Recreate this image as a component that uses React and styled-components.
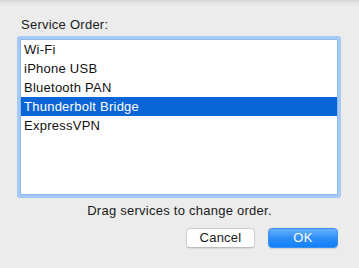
import React from "react";
import styled, { createGlobalStyle } from "styled-components";

const Global = createGlobalStyle`
  html, body { margin: 0; padding: 0; background: #ececec; }
  body { font-family: "Liberation Sans", Arial, sans-serif; }
`;

const Sheet = styled.div`
  width: 359px;
  height: 268px;
  box-sizing: border-box;
  padding: 17px 21px 0 20px;
  background: linear-gradient(#d6d6d6 0px, #e6e6e6 3px, #ececec 6px);
  display: flex;
  flex-direction: column;
  font-size: 13px;
  line-height: 16px;
  letter-spacing: 0.25px;
  color: #1a1a1a;
`;

const Label = styled.div`
  padding-left: 1px;
  margin-bottom: 6px;
`;

const List = styled.div`
  height: 156px;
  box-sizing: border-box;
  background: #fff;
  border: 1px solid #8fb8ee;
  box-shadow: 0 0 0 3px #a6c9f5;
  border-radius: 1px;
  display: flex;
  flex-direction: column;
`;

const Row = styled.div`
  height: 19px;
  line-height: 19px;
  padding-left: 3px;
  background: ${(p) => (p.$selected ? "#0a66d6" : "transparent")};
  color: ${(p) => (p.$selected ? "#fff" : "#111")};
  white-space: nowrap;
`;

const Hint = styled.div`
  margin-top: 8px;
  text-align: center;
  margin-right: -1px;
`;

const Buttons = styled.div`
  margin-top: 9px;
  display: flex;
  justify-content: flex-end;
  gap: 13px;
  padding-right: 0px;
`;

const Button = styled.button`
  width: ${(p) => (p.$primary ? "70px" : "69px")};
  height: 20px;
  box-sizing: border-box;
  font: inherit;
  letter-spacing: 0.25px;
  border-radius: 4px;
  padding: 0;
  text-align: center;
  line-height: 18px;
  ${(p) =>
    p.$primary
      ? `
    color: #fff;
    border: 1px solid #3a8ff5;
    background: linear-gradient(#66b1fb, #2a8cf8 55%, #1180f7);
    box-shadow: 0 0.5px 1px rgba(0,0,0,0.12);
  `
      : `
    color: #1a1a1a;
    border: 1px solid #d0d0d0;
    border-bottom-color: #bdbdbd;
    background: #fff;
    box-shadow: 0 0.5px 1px rgba(0,0,0,0.08);
  `}
`;

const services = ["Wi-Fi", "iPhone USB", "Bluetooth PAN", "Thunderbolt Bridge", "ExpressVPN"];

export default function App() {
  return (
    <>
      <Global />
      <Sheet>
        <Label>Service Order:</Label>
        <List>
          {services.map((s) => (
            <Row key={s} $selected={s === "Thunderbolt Bridge"}>
              {s}
            </Row>
          ))}
        </List>
        <Hint>Drag services to change order.</Hint>
        <Buttons>
          <Button>Cancel</Button>
          <Button $primary>OK</Button>
        </Buttons>
      </Sheet>
    </>
  );
}
